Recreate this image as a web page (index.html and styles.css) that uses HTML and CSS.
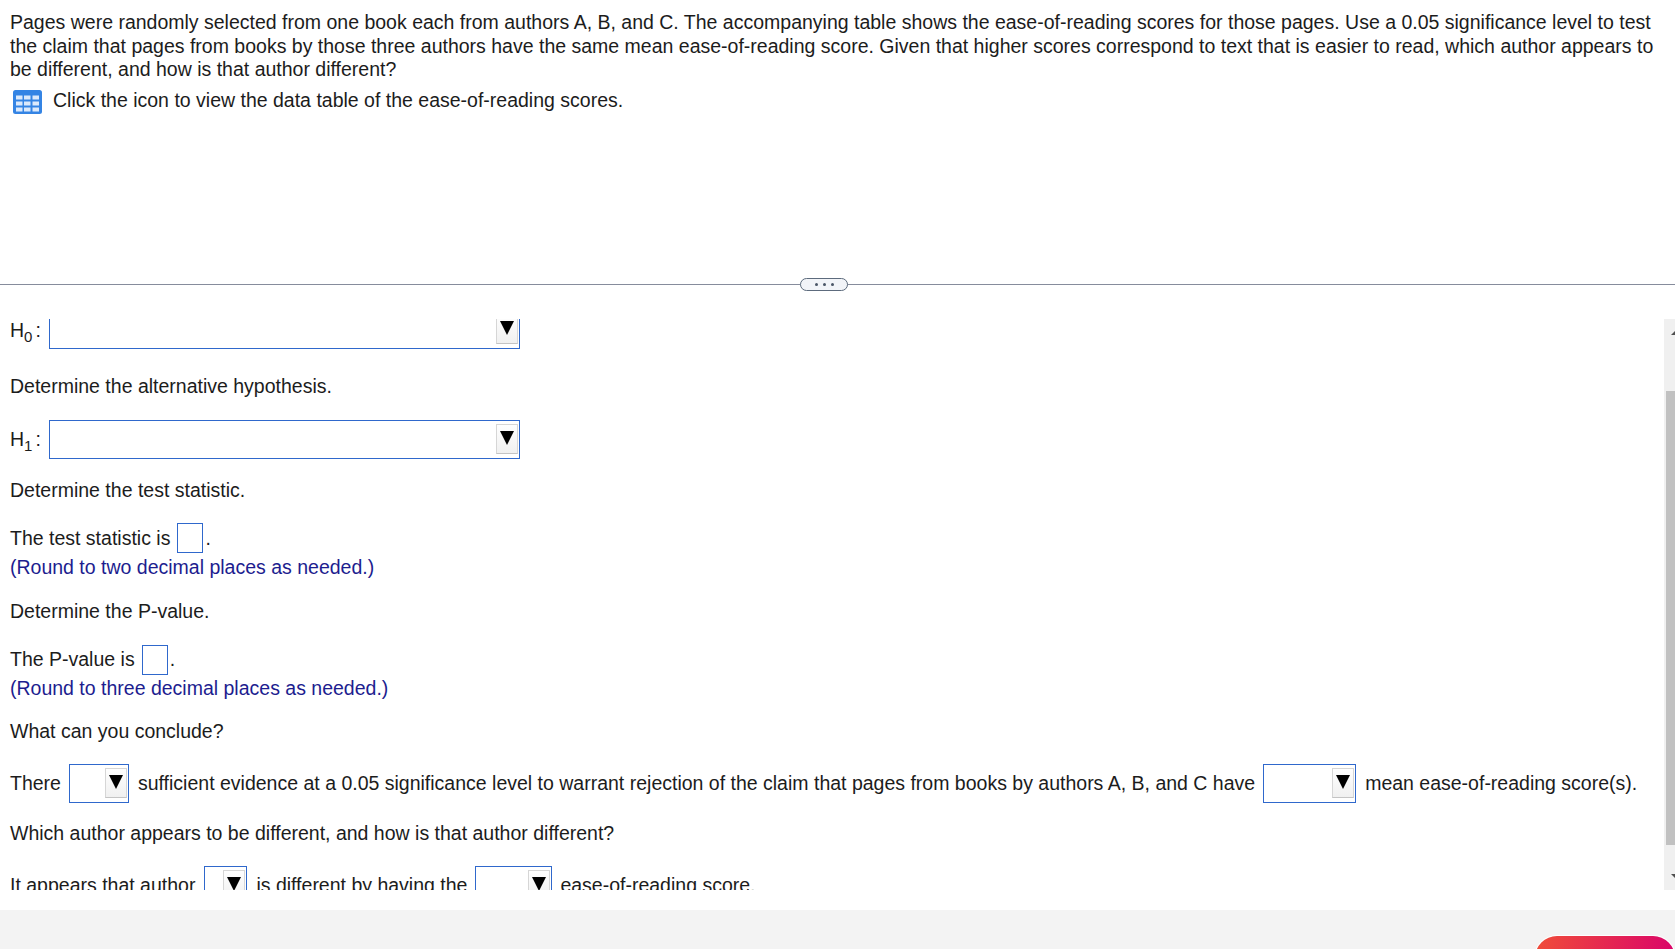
FILE: index.html
```html
<!DOCTYPE html>
<html lang="en">
<head>
<meta charset="utf-8">
<title>Ease-of-reading scores</title>
<link rel="stylesheet" href="styles.css">
</head>
<body>
<div class="page">
  <section class="question">
    <p class="intro">Pages were randomly selected from one book each from authors A, B, and C. The accompanying table shows the ease-of-reading scores for those pages. Use a 0.05 significance level to test the claim that pages from books by those three authors have the same mean ease-of-reading score. Given that higher scores correspond to text that is easier to read, which author appears to be different, and how is that author different?</p>
    <div class="data-link">
      <svg class="table-icon" viewBox="0 0 29 24" aria-hidden="true">
        <rect width="29" height="24" rx="2.5" fill="#3484e4"/>
        <g fill="#dbe9fb">
          <rect x="3" y="5.5" width="6.5" height="4"/><rect x="11" y="5.5" width="6.5" height="4"/><rect x="19.5" y="5.5" width="6.5" height="4"/>
          <rect x="3" y="11.5" width="6.5" height="4"/><rect x="11" y="11.5" width="6.5" height="4"/><rect x="19.5" y="11.5" width="6.5" height="4"/>
          <rect x="3" y="17.5" width="6.5" height="4"/><rect x="11" y="17.5" width="6.5" height="4"/><rect x="19.5" y="17.5" width="6.5" height="4"/>
        </g>
      </svg>
      <span class="link-text">Click the icon to view the data table of the ease-of-reading scores.</span>
    </div>
  </section>

  <div class="divider"><span class="pill"><i></i><i></i><i></i></span></div>

  <section class="pane">
    <div class="pane-body">
      <div class="row hyp first">
        <span class="hlabel">H<sub>0</sub><span class="colon">:</span></span>
        <span class="select wide"><span class="arrow"><svg viewBox="0 0 14 14"><polygon points="0,0 14,0 7,14"/></svg></span></span>
      </div>
      <p class="after-hyp0">Determine the alternative hypothesis.</p>
      <div class="row hyp h1">
        <span class="hlabel">H<sub>1</sub><span class="colon">:</span></span>
        <span class="select wide"><span class="arrow"><svg viewBox="0 0 14 14"><polygon points="0,0 14,0 7,14"/></svg></span></span>
      </div>
      <p class="stat-head">Determine the test statistic.</p>
      <div class="row answer"><span class="tx">The test statistic is</span><span class="box"></span><span class="tx">.</span></div>
      <p class="hint">(Round to two decimal places as needed.)</p>
      <p class="p-head">Determine the P-value.</p>
      <div class="row answer p-answer"><span>The P-value is</span><span class="box"></span><span>.</span></div>
      <p class="hint second">(Round to three decimal places as needed.)</p>
      <p class="conclude">What can you conclude?</p>
      <div class="row sentence">
        <span>There</span>
        <span class="select s60"><span class="arrow"><svg viewBox="0 0 14 14"><polygon points="0,0 14,0 7,14"/></svg></span></span>
        <span>sufficient evidence at a 0.05 significance level to warrant rejection of the claim that pages from books by authors A, B, and C have</span>
        <span class="select s93"><span class="arrow"><svg viewBox="0 0 14 14"><polygon points="0,0 14,0 7,14"/></svg></span></span>
        <span>mean ease-of-reading score(s).</span>
      </div>
      <p class="which">Which author appears to be different, and how is that author different?</p>
      <div class="row sentence last">
        <span>It appears that author</span>
        <span class="select s43"><span class="arrow"><svg viewBox="0 0 14 14"><polygon points="0,0 14,0 7,14"/></svg></span></span>
        <span>is different by having the</span>
        <span class="select s77"><span class="arrow"><svg viewBox="0 0 14 14"><polygon points="0,0 14,0 7,14"/></svg></span></span>
        <span>ease-of-reading score.</span>
      </div>
    </div>
    <div class="scrollbar">
      <span class="sb-up"></span>
      <span class="sb-thumb"></span>
      <span class="sb-down"></span>
    </div>
  </section>

  <footer class="footer"><span class="cta"></span></footer>
</div>
</body>
</html>
```
FILE: styles.css
```css
html, body { margin: 0; padding: 0; background: #fff; }
body { font-family: "Liberation Sans", Arial, sans-serif; font-size: 19.5px; line-height: 23.5px; color: #1c1c1c; }
p { margin: 0; }
.page { width: 1675px; height: 949px; display: flex; flex-direction: column; overflow: hidden; }

.question { height: 284px; padding: 11.4px 10px 0; box-sizing: border-box; flex: none; }
.intro { width: 1655px; }
.data-link { display: flex; align-items: center; gap: 11px; margin-top: 8.1px; padding-left: 3px; height: 24px; }
.table-icon { width: 29px; height: 24px; flex: none; }
.link-text { margin-bottom: 3px; }

.divider { height: 1px; background: #868c9c; position: relative; flex: none; }
.pill { position: absolute; left: 800px; top: -6px; width: 48px; height: 13px; box-sizing: border-box; border: 1.5px solid #5d6b7d; border-radius: 7px; background: #f2f4f8; display: flex; align-items: center; justify-content: center; gap: 5px; }
.pill i { width: 3px; height: 3px; border-radius: 50%; background: #4a5566; }

.pane { margin-top: 34px; height: 571px; flex: none; position: relative; overflow: hidden; }
.pane-body { padding: 0 10px; margin-top: -9px; }
.row { display: flex; align-items: center; white-space: nowrap; }
.tx { padding-top: 2px; }

.hyp { height: 39px; }
.hlabel { width: 39px; flex: none; }
.first .hlabel { padding-top: 3px; }
.hlabel sub { font-size: 15px; line-height: 0; }
.colon { margin-left: 3px; }

.select { display: flex; justify-content: flex-end; align-items: flex-start; box-sizing: border-box; height: 39px; border: 1.5px solid #2f68cc; padding: 3px 1px 0 0; background: #fff; flex: none; }
.select.wide { width: 471px; }
.s60 { width: 60px; margin-right: 1px; }
.s93 { width: 93px; margin-right: 1px; }
.s43 { width: 43px; margin-left: 1px; margin-right: 1px; }
.s77 { width: 77px; }
.arrow { width: 22px; height: 30px; box-sizing: border-box; padding-top: 6px; display: flex; justify-content: center; align-items: flex-start; border: 1px solid #d6d6d6; border-bottom-color: #c4c4c4; background: linear-gradient(#fefefe, #f0f0f0); }
.arrow svg { width: 14px; height: 14px; display: block; fill: #000; }

.after-hyp0 { margin-top: 25.5px; }
.h1 { margin-top: 22px; }
.stat-head { margin-top: 20px; }
.answer { margin-top: 20.5px; height: 30px; }
.box { width: 26px; height: 30px; box-sizing: border-box; border: 1.5px solid #2f68cc; margin-left: 7px; margin-right: 2px; }
.hint { color: #1d1d8f; margin-top: 3px; }
.p-head { margin-top: 20px; }
.p-answer { margin-top: 22px; }
.hint.second { margin-top: 2px; }
.conclude { margin-top: 19px; }
.sentence { gap: 8px; height: 39px; margin-top: 21px; }
.which { margin-top: 19px; }
.last { margin-top: 20.5px; }

.scrollbar { position: absolute; top: 0; right: 0; bottom: 0; width: 11px; background: #f0f0f0; }
.sb-thumb { position: absolute; left: 2px; right: 0; top: 72px; height: 454px; background: #c1c1c1; }
.sb-up, .sb-down { position: absolute; right: 0; width: 0; height: 0; border-right: 4px solid #505050; }
.sb-up { top: 12px; border-top: 4px solid transparent; }
.sb-down { bottom: 12px; border-bottom: 4px solid transparent; }

.footer { margin-top: 20px; flex: 1; background: #f3f3f3; position: relative; }
.cta { position: absolute; left: 1535px; top: 26px; width: 140px; height: 60px; border-radius: 22px 22px 0 0; background: linear-gradient(100deg, #f04d38, #d9006c); box-shadow: 0 0 0 1px #fff; }
```
